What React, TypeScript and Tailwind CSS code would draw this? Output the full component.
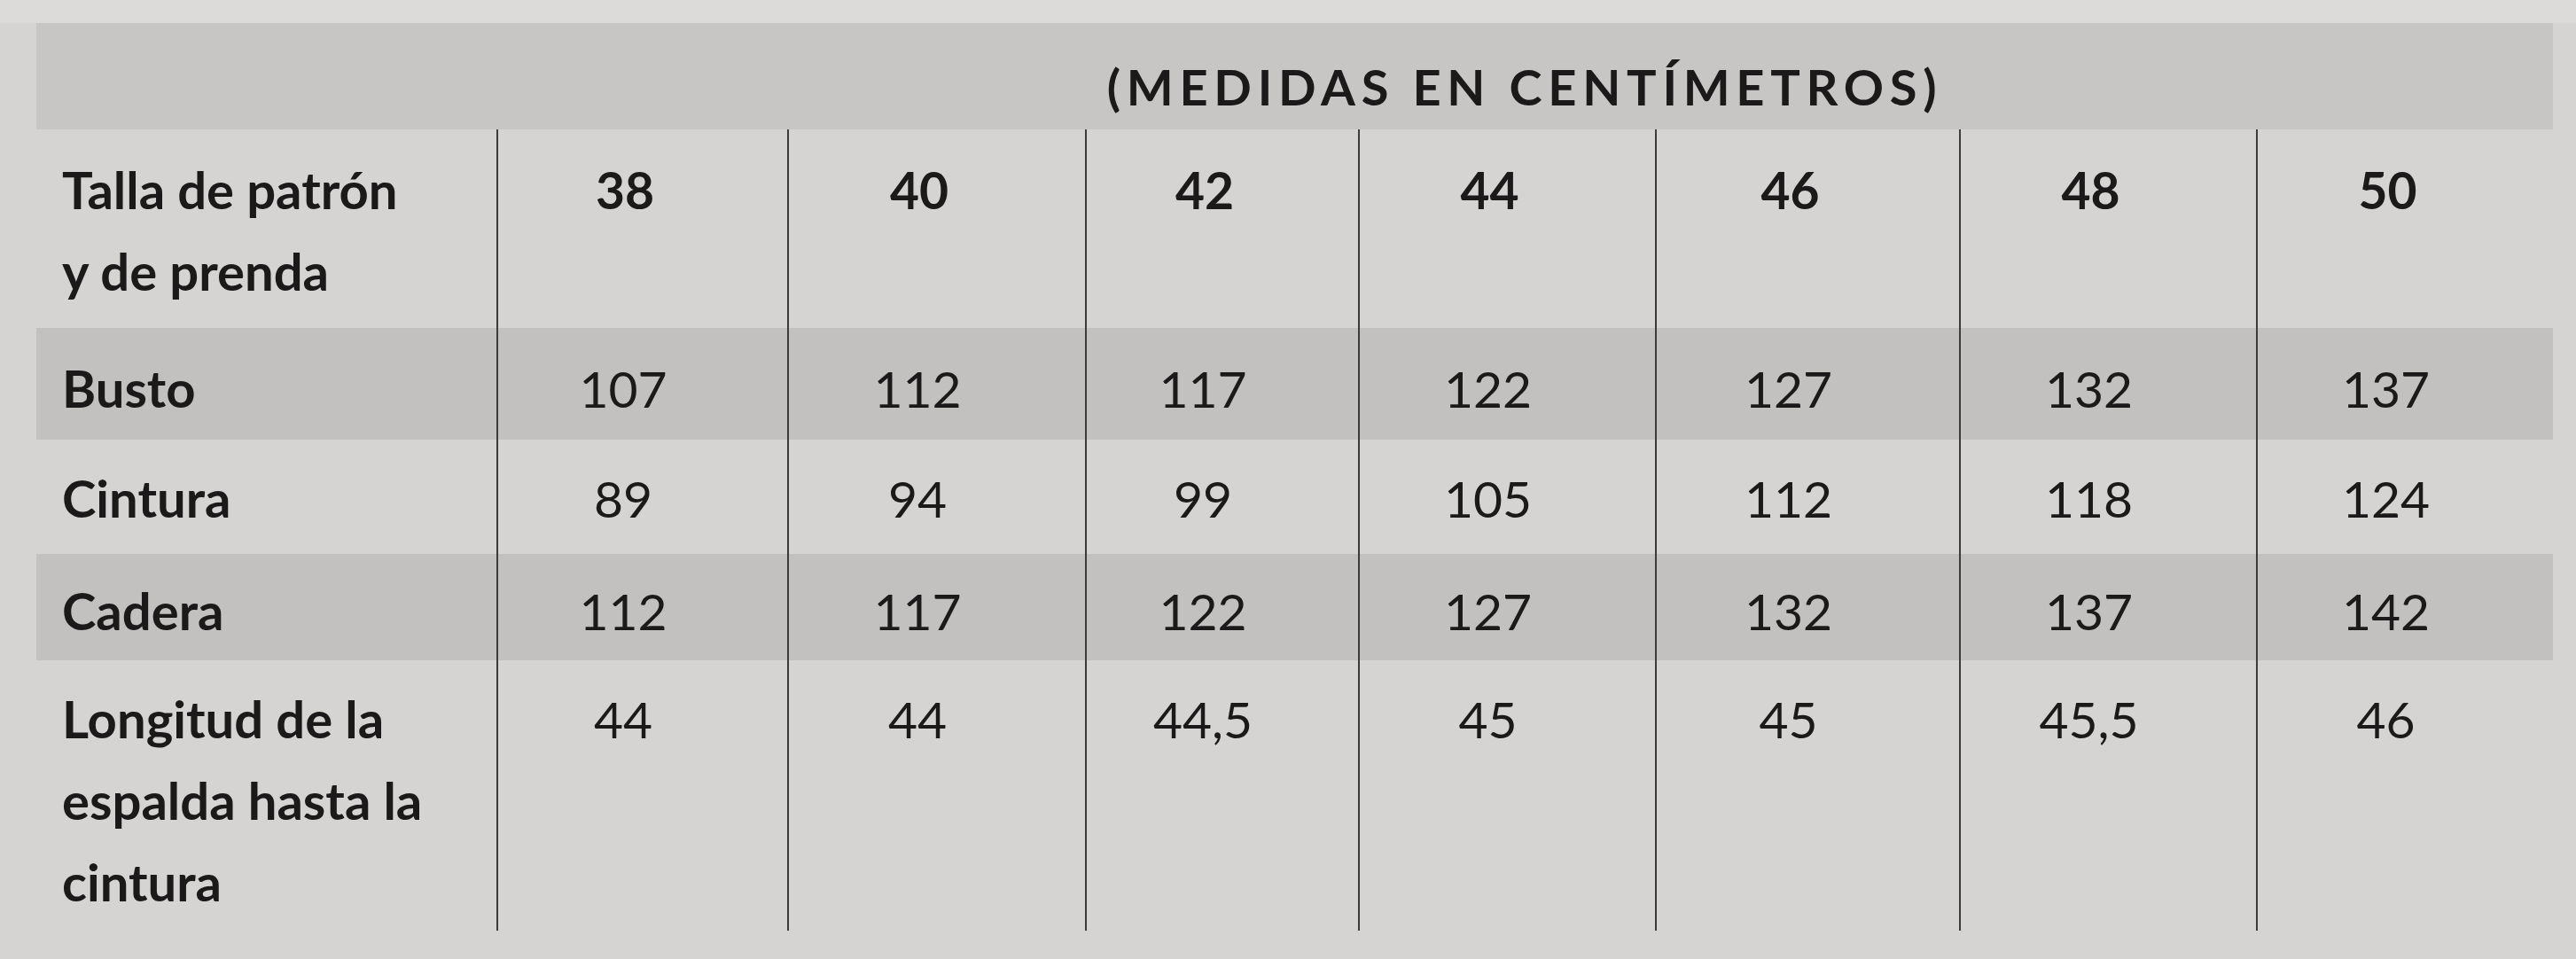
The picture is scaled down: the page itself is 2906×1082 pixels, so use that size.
const columns = 'grid grid-cols-[519px_328px_336px_308px_335px_343px_335px_335px]';

interface SizeRow {
  label: string[];
  values: string[];
  band: boolean;
  height: string;
  padTop: string;
}

const sizes = ['38', '40', '42', '44', '46', '48', '50'];

const rows: SizeRow[] = [
  {
    label: ['Busto'],
    values: ['107', '112', '117', '122', '127', '132', '137'],
    band: true,
    height: 'h-[126px]',
    padTop: 'pt-[22px]',
  },
  {
    label: ['Cintura'],
    values: ['89', '94', '99', '105', '112', '118', '124'],
    band: false,
    height: 'h-[129px]',
    padTop: 'pt-[20px]',
  },
  {
    label: ['Cadera'],
    values: ['112', '117', '122', '127', '132', '137', '142'],
    band: true,
    height: 'h-[120px]',
    padTop: 'pt-[18px]',
  },
  {
    label: ['Longitud de la', 'espalda hasta la', 'cintura'],
    values: ['44', '44', '44,5', '45', '45', '45,5', '46'],
    band: false,
    height: 'h-[305px]',
    padTop: 'pt-[20px]',
  },
];

const Label = ({ lines }: { lines: string[] }) => (
  <div className="pl-[29px] font-bold text-[58px]">
    {lines.map((line) => (
      <div key={line}>{line}</div>
    ))}
  </div>
);

export default function App() {
  return (
    <div
      className="w-[2906px] h-[1082px] overflow-hidden bg-[#d5d4d2] text-[#1b1919] text-[57px] leading-[92px]"
      style={{ fontFamily: 'Lato, "Open Sans", sans-serif' }}
    >
      <div className="h-[26px] bg-[#dcdbd9]" />
      <div className="pl-[41px]">
        <div className="w-[2839px]">
          {/* title band */}
          <div className={`${columns} h-[120px] bg-[#c7c6c4]`}>
            <div />
            <div className="col-span-7 pt-[42px] text-center text-[56px] leading-[60px] font-bold tracking-[0.12em]">
              (MEDIDAS EN CENTÍMETROS)
            </div>
          </div>

          {/* size header */}
          <div className={`${columns} h-[224px]`}>
            <div className="pt-[22px]">
              <Label lines={['Talla de patrón', 'y de prenda']} />
            </div>
            {sizes.map((s) => (
              <div key={s} className="border-l-2 border-[#3c3a3a] pt-[22px] pr-[40px] text-center font-bold">
                {s}
              </div>
            ))}
          </div>

          {rows.map((row) => (
            <div
              key={row.label[0]}
              className={`${columns} ${row.height} ${row.band ? 'bg-[#c2c1bf]' : ''}`}
            >
              <div className={row.padTop}>
                <Label lines={row.label} />
              </div>
              {row.values.map((v, i) => (
                <div
                  key={i}
                  className={`border-l-2 border-[#3c3a3a] ${row.padTop} pr-[44px] text-center`}
                >
                  {v}
                </div>
              ))}
            </div>
          ))}
        </div>
      </div>
    </div>
  );
}
